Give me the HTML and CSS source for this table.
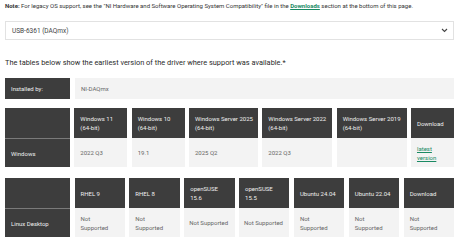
FILE: index.html
```html
<!DOCTYPE html>
<html lang="en">
<head>
    <meta charset="UTF-8">
    <meta name="viewport" content="width=device-width, initial-scale=1.0">
    <title>Driver Compatibility</title>
    <link rel="stylesheet" href="styles.css">
</head>
<body>
    <p class="note"><strong>Note:</strong> For legacy OS support, see the "NI Hardware and Software Operating System Compatibility" file in the <a href="#downloads" class="note-link">Downloads</a> section at the bottom of this page.</p>

    <div class="select-box">
        <span>USB-6361 (DAQmx)</span>
        <svg class="chevron" width="7" height="5" viewBox="0 0 7 5"><path d="M1 1l2.5 2.5L6 1" fill="none" stroke="#444" stroke-width="1.1"/></svg>
    </div>

    <h2 class="intro">The tables below show the earliest version of the driver where support was available.*</h2>

    <div class="installed">
        <div class="cell dark">Installed by:</div>
        <div class="cell light">NI-DAQmx</div>
    </div>

    <div class="compat compat-win">
        <div class="col label-col">
            <div class="head dark"></div>
            <div class="body dark divided">Windows</div>
        </div>
        <div class="col">
            <div class="head dark">Windows 11<br>(64-bit)</div>
            <div class="body light">2022 Q3</div>
        </div>
        <div class="col">
            <div class="head dark">Windows 10<br>(64-bit)</div>
            <div class="body light">19.1</div>
        </div>
        <div class="col">
            <div class="head dark">Windows Server 2025<br>(64-bit)</div>
            <div class="body light">2025 Q2</div>
        </div>
        <div class="col">
            <div class="head dark">Windows Server 2022<br>(64-bit)</div>
            <div class="body light">2022 Q3</div>
        </div>
        <div class="col">
            <div class="head dark">Windows Server 2019<br>(64-bit)</div>
            <div class="body light"></div>
        </div>
        <div class="col">
            <div class="head dark">Download</div>
            <div class="body light"><a href="#latest" class="link">latest<br>version</a></div>
        </div>
    </div>

    <div class="compat compat-linux">
        <div class="col label-col">
            <div class="head dark"></div>
            <div class="body dark divided">Linux Desktop</div>
        </div>
        <div class="col">
            <div class="head dark">RHEL 9</div>
            <div class="body light">Not<br>Supported</div>
        </div>
        <div class="col">
            <div class="head dark">RHEL 8</div>
            <div class="body light">Not<br>Supported</div>
        </div>
        <div class="col">
            <div class="head dark">openSUSE<br>15.6</div>
            <div class="body light nowrap">Not Supported</div>
        </div>
        <div class="col">
            <div class="head dark">openSUSE<br>15.5</div>
            <div class="body light nowrap">Not Supported</div>
        </div>
        <div class="col">
            <div class="head dark">Ubuntu 24.04</div>
            <div class="body light">Not<br>Supported</div>
        </div>
        <div class="col">
            <div class="head dark">Ubuntu 22.04</div>
            <div class="body light">Not<br>Supported</div>
        </div>
        <div class="col">
            <div class="head dark">Download</div>
            <div class="body light">Not<br>Supported</div>
        </div>
    </div>
</body>
</html>
```

FILE: styles.css
```css
body {
    font-family: Roboto, "Noto Sans", sans-serif;
    margin: 0;
    padding: 0 20px 0 5px;
    color: #333;
    background: #fff;
}
.note {
    font-size: 6px;
    line-height: 8px;
    margin: 2px 0 0;
    color: #333;
}
.note strong {
    font-weight: 700;
}
.note-link {
    color: #1a8a63;
    font-weight: 700;
}
.select-box {
    display: flex;
    align-items: center;
    justify-content: space-between;
    height: 17px;
    margin-top: 11px;
    padding: 0 5px 0 6px;
    border: 1px solid #e2e2e2;
    font-size: 6.5px;
    color: #444;
}
.chevron {
    display: block;
}
.intro {
    font-size: 7.4px;
    font-weight: 400;
    line-height: 10px;
    margin: 18px 0 0;
    color: #2a2a2a;
}
.installed {
    display: grid;
    grid-template-columns: 65px 1fr;
    column-gap: 5px;
    margin-top: 10px;
    height: 21px;
}
.cell {
    display: flex;
    align-items: center;
    padding: 0 6px;
    font-size: 6px;
}
.dark {
    background: #3d3d3d;
    color: #eee;
}
.light {
    background: #f3f3f3;
    color: #666;
}
.compat {
    display: grid;
    font-size: 6px;
    line-height: 9px;
}
.compat-win {
    grid-template-columns: 65px 53px 53px 69px 70px 70px 43px;
    column-gap: 4.33px;
    margin-top: 9px;
}
.compat-linux {
    grid-template-columns: 65px repeat(7, 1fr);
    column-gap: 4.5px;
    margin-top: 11px;
}
.col {
    display: flex;
    flex-direction: column;
}
.head,
.body {
    display: flex;
    align-items: center;
    padding: 0 6px;
}
.head {
    height: 30px;
    white-space: nowrap;
}
.body {
    height: 29px;
}
.divided {
    border-top: 1px solid #7a7a7a;
    height: 28px;
}
.nowrap {
    white-space: nowrap;
    padding: 0 5px;
}
.link {
    color: #1a8a63;
}
```
